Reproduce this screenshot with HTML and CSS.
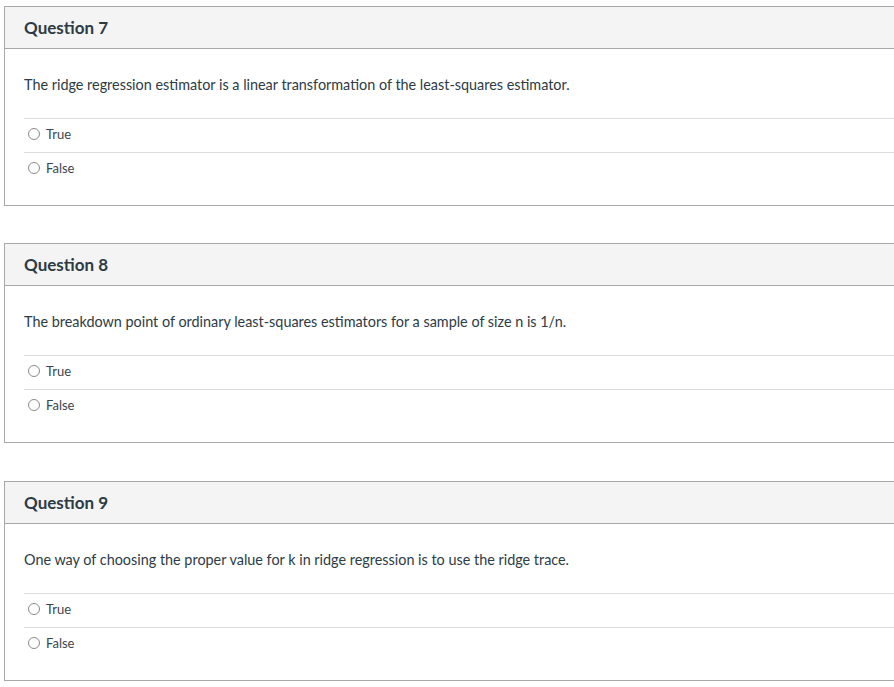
FILE: index.html
```html
<!DOCTYPE html>
<html>
<head>
<meta charset="utf-8">
<link rel="stylesheet" href="styles.css">
</head>
<body>
<div class="page">
  <div class="question">
    <div class="q-header"><h2 class="q-title">Question 7</h2></div>
    <div class="q-body">
      <p class="q-text">The ridge regression estimator is a linear transformation of the least-squares estimator.</p>
      <div class="answers">
        <div class="answer"><span class="radio"></span><span class="answer-label">True</span></div>
        <div class="answer"><span class="radio"></span><span class="answer-label">False</span></div>
      </div>
    </div>
  </div>
  <div class="question">
    <div class="q-header"><h2 class="q-title">Question 8</h2></div>
    <div class="q-body">
      <p class="q-text">The breakdown point of ordinary least-squares estimators for a sample of size n is 1/n.</p>
      <div class="answers">
        <div class="answer"><span class="radio"></span><span class="answer-label">True</span></div>
        <div class="answer"><span class="radio"></span><span class="answer-label">False</span></div>
      </div>
    </div>
  </div>
  <div class="question">
    <div class="q-header"><h2 class="q-title">Question 9</h2></div>
    <div class="q-body">
      <p class="q-text">One way of choosing the proper value for k in ridge regression is to use the ridge trace.</p>
      <div class="answers">
        <div class="answer"><span class="radio"></span><span class="answer-label">True</span></div>
        <div class="answer"><span class="radio"></span><span class="answer-label">False</span></div>
      </div>
    </div>
  </div>
</div>
</body>
</html>
```

FILE: styles.css
```css
html, body {
  margin: 0;
  padding: 0;
  background: #ffffff;
  overflow: hidden;
}
body {
  font-family: Lato, "Open Sans", sans-serif;
  color: #2d3b45;
}
.page {
  padding: 6px 0 0 4px;
  display: flex;
  flex-direction: column;
  gap: 37px;
}
.question {
  width: 900px;
  height: 200px;
  box-sizing: border-box;
  border: 1px solid #a8a8a8;
  background: #fff;
}
.question:last-child {
  margin-top: 1px;
}
.q-header {
  height: 42px;
  box-sizing: border-box;
  background: #f4f4f4;
  border-bottom: 1px solid #a8a8a8;
  padding: 0 19px;
  display: flex;
  align-items: center;
}
.q-title {
  margin: 0;
  font-size: 17px;
  font-weight: 700;
  color: #2d3b45;
  line-height: 22px;
}
.q-body {
  padding: 26px 0 0 19px;
}
.q-text {
  margin: 0 0 23px 0;
  font-size: 14.4px;
  line-height: 20px;
  color: #2d3b45;
}
.answers {
  display: flex;
  flex-direction: column;
}
.answer {
  border-top: 1px solid #dcdcdc;
  height: 34px;
  box-sizing: border-box;
  display: flex;
  align-items: center;
  padding-left: 4px;
  padding-bottom: 4px;
  gap: 6px;
}
.radio {
  width: 12px;
  height: 12px;
  box-sizing: border-box;
  border: 1px solid #8a8a8a;
  border-radius: 50%;
  background: #fff;
  flex: none;
  margin-top: 1px;
}
.answer-label {
  font-size: 13px;
  color: #3a464f;
  line-height: 16px;
}
```
